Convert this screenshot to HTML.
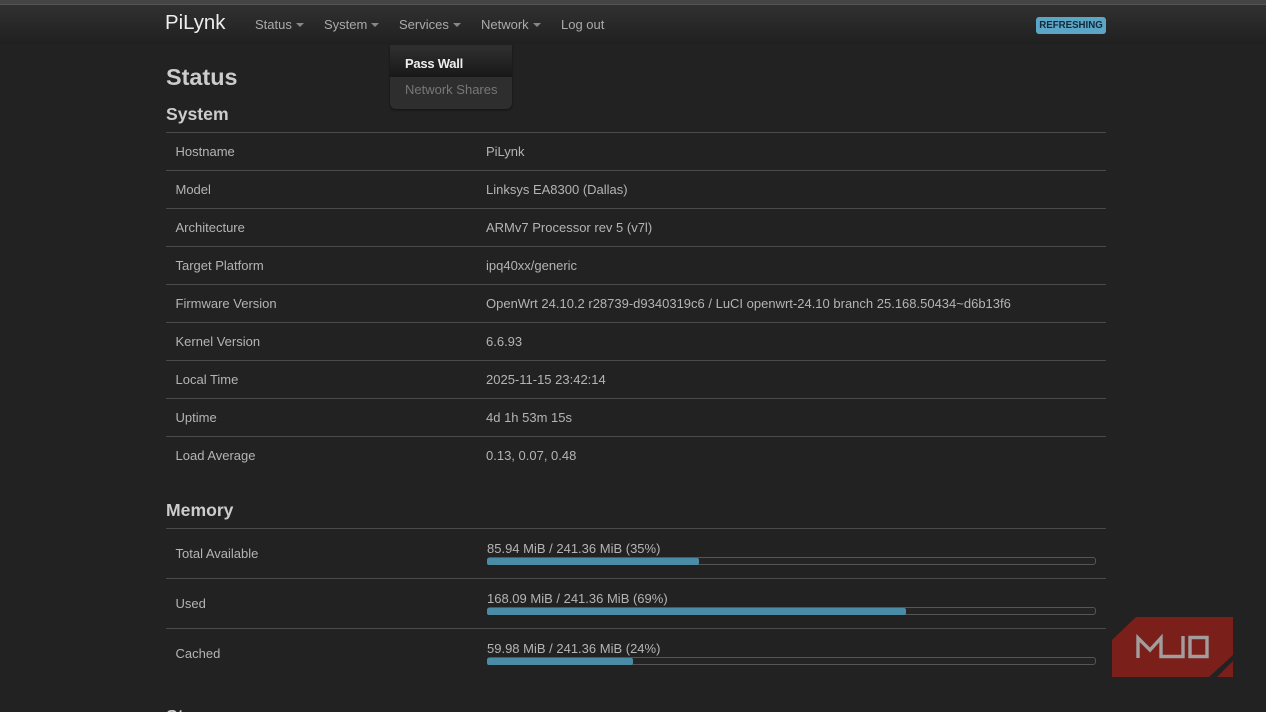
<!DOCTYPE html>
<html><head><meta charset="utf-8"><style>
html,body{margin:0;padding:0;width:1266px;height:712px;overflow:hidden;background:#222}
#root{position:relative;width:1266px;height:712px;overflow:hidden;background:#222;font-family:"Liberation Sans",sans-serif;color:#bbb}
#root div{position:absolute;white-space:nowrap}
#nav{left:0;top:0;width:1266px;height:44px;background:linear-gradient(#313131,#202020);border-top:4px solid #454545;box-sizing:border-box}
#navline{left:0;top:4px;width:1266px;height:1px;background:#555}
.n{font-size:13px;color:#aaa;top:16px;line-height:17px}
.c{width:0;height:0;border-left:4px solid transparent;border-right:4px solid transparent;border-top:4px solid #888;top:23px}
.h{font-weight:bold;font-size:17.6px;line-height:22px;color:#ccc;left:166px}
.l{left:166px;width:940px;height:1px;background:#4a4a4a}
.k{left:175.5px;font-size:13px;line-height:17px;color:#b4b4b4}
.v{left:486px;font-size:13px;line-height:17px;color:#b4b4b4}
.t{left:487px;font-size:13px;line-height:16px;color:#b4b4b4}
.b{left:487px;width:609px;height:8px;background:#242424;border:1px solid #555;border-radius:3px;box-sizing:border-box}
.f{left:487px;height:7px;background:#4a8ba6;border-radius:2px}
</style></head><body><div id="root">
<div id="nav"></div><div id="navline"></div>
<div style="left:165px;top:11px;font-size:20.4px;line-height:25px;color:#eee">PiLynk</div>
<div class="n" style="left:255px">Status</div><div class="c" style="left:296px"></div>
<div class="n" style="left:324px">System</div><div class="c" style="left:371px"></div>
<div class="n" style="left:399px">Services</div><div class="c" style="left:453px"></div>
<div class="n" style="left:481px">Network</div><div class="c" style="left:533px"></div>
<div class="n" style="left:561px">Log out</div>
<div style="left:1036px;top:17px;width:70px;height:17px;background:#5ba6c6;border-radius:3px;font-size:9.7px;font-weight:bold;line-height:17px;text-align:center;color:#12293a">REFRESHING</div>

<div style="left:390px;top:45px;width:122px;height:64px;background:#2e2e2e;border-radius:0 0 6px 6px;box-shadow:0 1px 2px #111"></div>
<div style="left:390px;top:50px;width:122px;height:27px;background:linear-gradient(#2c2c2c,#181818)"></div>
<div style="left:405px;top:55px;font-size:13px;font-weight:bold;letter-spacing:-.25px;line-height:17px;color:#eee">Pass Wall</div>
<div style="left:405px;top:81px;font-size:13px;line-height:17px;color:#777">Network Shares</div>

<div style="left:166px;top:63px;font-size:23.4px;font-weight:bold;line-height:28px;color:#ccc">Status</div>
<div class="h" style="top:103px">System</div>
<div class="l" style="top:132px"></div>
<div class="k" style="top:143px">Hostname</div><div class="v" style="top:143px">PiLynk</div>
<div class="l" style="top:170px"></div>
<div class="k" style="top:181px">Model</div><div class="v" style="top:181px">Linksys EA8300 (Dallas)</div>
<div class="l" style="top:208px"></div>
<div class="k" style="top:219px">Architecture</div><div class="v" style="top:219px">ARMv7 Processor rev 5 (v7l)</div>
<div class="l" style="top:246px"></div>
<div class="k" style="top:257px">Target Platform</div><div class="v" style="top:257px">ipq40xx/generic</div>
<div class="l" style="top:284px"></div>
<div class="k" style="top:295px">Firmware Version</div><div class="v" style="top:295px">OpenWrt 24.10.2 r28739-d9340319c6 / LuCI openwrt-24.10 branch 25.168.50434~d6b13f6</div>
<div class="l" style="top:322px"></div>
<div class="k" style="top:333px">Kernel Version</div><div class="v" style="top:333px">6.6.93</div>
<div class="l" style="top:360px"></div>
<div class="k" style="top:371px">Local Time</div><div class="v" style="top:371px">2025-11-15 23:42:14</div>
<div class="l" style="top:398px"></div>
<div class="k" style="top:409px">Uptime</div><div class="v" style="top:409px">4d 1h 53m 15s</div>
<div class="l" style="top:436px"></div>
<div class="k" style="top:447px">Load Average</div><div class="v" style="top:447px">0.13, 0.07, 0.48</div>

<div class="h" style="top:499px">Memory</div>
<div class="l" style="top:528px"></div>
<div class="k" style="top:545px">Total Available</div>
<div class="t" style="top:541px">85.94 MiB / 241.36 MiB (35%)</div>
<div class="b" style="top:557px"></div><div class="f" style="top:558px;width:212px"></div>
<div class="l" style="top:578px"></div>
<div class="k" style="top:595px">Used</div>
<div class="t" style="top:591px">168.09 MiB / 241.36 MiB (69%)</div>
<div class="b" style="top:607px"></div><div class="f" style="top:608px;width:419px"></div>
<div class="l" style="top:628px"></div>
<div class="k" style="top:645px">Cached</div>
<div class="t" style="top:641px">59.98 MiB / 241.36 MiB (24%)</div>
<div class="b" style="top:657px"></div><div class="f" style="top:658px;width:146px"></div>

<div class="h" style="top:705px">Storage</div>

<svg style="position:absolute;left:1090px;top:600px" width="176" height="112" viewBox="0 0 176 112">
<polygon points="46,17 143,17 143,77 22,77 22,40" fill="#7a1f19"/>
<polygon points="143,55 143,61 127,77 119,77" fill="#222"/>
<path d="M48 58V38L60 50L71 38V56.5H93V36M100 37.5H117V56.5H100Z" fill="none" stroke="#a39d9d" stroke-width="3.4"/>
</svg>
</div></body></html>
